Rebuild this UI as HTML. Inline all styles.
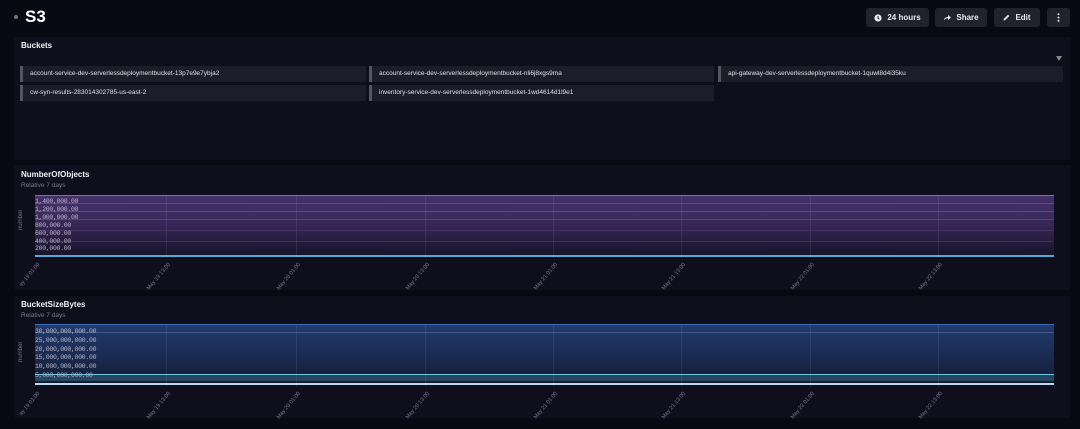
<!DOCTYPE html>
<html><head><meta charset="utf-8"><style>
*{margin:0;padding:0;box-sizing:border-box}
body{width:1080px;height:429px;background:#090914;font-family:"Liberation Sans",sans-serif;color:#fff;position:relative;overflow:hidden}
.abs{position:absolute}
.btn{position:absolute;top:8px;height:19px;background:#22222e;border-radius:3px;color:#e8e8ee;font-size:8px;font-weight:bold;display:flex;align-items:center;justify-content:center;gap:5px}
.panel{position:absolute;left:14px;width:1056px;background:#0e0e1c;border-radius:2px}
.ptitle{position:absolute;left:7px;font-size:8px;font-weight:bold;color:#f0f0f5}
.psub{position:absolute;left:7px;font-size:6.5px;color:#7a7a88}
.tag{position:absolute;height:16px;background:#1c1c2a;border-left:3px solid #55555f;font-size:6.5px;color:#e0e0e8;padding-left:7px;line-height:16px;white-space:nowrap;overflow:hidden}
.yl{position:absolute;font-size:6.5px;color:#b8b8c8;font-family:"Liberation Mono",monospace;letter-spacing:-0.3px}
.xl{position:absolute;font-size:5.5px;color:#7a7a90;transform:rotate(-50deg);transform-origin:right top;white-space:nowrap}
.vg{position:absolute;width:1px;background:rgba(255,255,255,0.08)}
</style></head><body>
<div class="abs" style="left:14px;top:15px;width:4px;height:4px;border-radius:50%;background:#777"></div>
<div class="abs" style="left:25px;top:7px;font-size:17px;font-weight:bold">S3</div>
<div class="btn" style="left:866px;width:63px"><svg width="8" height="8" viewBox="0 0 8 8"><circle cx="4" cy="4" r="3.6" fill="#e8e8ee"/><path d="M4 2v2.2l1.4.9" stroke="#22222e" stroke-width="1" fill="none"/></svg>24 hours</div>
<div class="btn" style="left:935px;width:52px"><svg width="8" height="7" viewBox="0 0 8 7"><path d="M1 6.5C1 4 3 3 5 3V1l3 2.6L5 6V4.3C3 4.3 2 5 1 6.5z" fill="#e8e8ee"/></svg>Share</div>
<div class="btn" style="left:994px;width:46px"><svg width="7" height="7" viewBox="0 0 7 7"><path d="M0.5 6.5l0.4-1.7L5 0.7l1.3 1.3L2.2 6.1z" fill="#e8e8ee"/></svg>Edit</div>
<div class="btn" style="left:1047px;width:23px"><svg width="3" height="9" viewBox="0 0 3 9"><circle cx="1.5" cy="1.2" r="1" fill="#e8e8ee"/><circle cx="1.5" cy="4.5" r="1" fill="#e8e8ee"/><circle cx="1.5" cy="7.8" r="1" fill="#e8e8ee"/></svg></div>

<div class="panel" style="top:37px;height:123px">
<div class="ptitle" style="top:4px">Buckets</div>
<div class="abs" style="left:1042px;top:19px;width:0;height:0;border-left:3px solid transparent;border-right:3px solid transparent;border-top:5px solid #888"></div>
<div class="tag" style="left:6px;top:29px;width:346px">account-service-dev-serverlessdeploymentbucket-13p7e9e7ybja2</div>
<div class="tag" style="left:355px;top:29px;width:345px">account-service-dev-serverlessdeploymentbucket-nli6j8xgs9ma</div>
<div class="tag" style="left:704px;top:29px;width:345px">api-gateway-dev-serverlessdeploymentbucket-1quwl8d4i35ku</div>
<div class="tag" style="left:6px;top:48px;width:346px">cw-syn-results-283014302785-us-east-2</div>
<div class="tag" style="left:355px;top:48px;width:345px">inventory-service-dev-serverlessdeploymentbucket-1wd4614d1l9e1</div>
</div>

<div class="panel" style="top:165px;height:125px">
<div class="ptitle" style="top:5px">NumberOfObjects</div>
<div class="psub" style="top:17px">Relative 7 days</div>
</div>
<div class="abs" style="left:35px;top:195px;width:1019px;height:61px;background:linear-gradient(#45306a,#3a2a5c 40%,#261c3e 75%,#17142a);border-top:1.5px solid #9a5cc8"></div>
<div class="abs" style="left:35px;top:203px;width:1019px;height:1px;background:rgba(160,120,210,0.35)"></div>
<div class="abs" style="left:35px;top:211px;width:1019px;height:1px;background:rgba(160,120,210,0.35)"></div>
<div class="abs" style="left:35px;top:219px;width:1019px;height:1px;background:rgba(160,120,210,0.3)"></div>
<div class="abs" style="left:35px;top:230px;width:1019px;height:1px;background:rgba(160,120,210,0.2)"></div>
<div class="abs" style="left:35px;top:241px;width:1019px;height:1px;background:rgba(160,120,210,0.2)"></div>
<div class="abs" style="left:35px;top:255px;width:1019px;height:2px;background:#5aa8d8"></div>
<div class="yl" style="left:35px;top:198px">1,400,000.00</div>
<div class="yl" style="left:35px;top:206px">1,200,000.00</div>
<div class="yl" style="left:35px;top:214px">1,000,000.00</div>
<div class="yl" style="left:35px;top:222px">800,000.00</div>
<div class="yl" style="left:35px;top:230px">600,000.00</div>
<div class="yl" style="left:35px;top:238px">400,000.00</div>
<div class="yl" style="left:35px;top:245px">200,000.00</div>
<div class="abs" style="left:18px;top:230px;font-size:6px;color:#777;transform:rotate(-90deg);transform-origin:left top">number</div>

<div class="panel" style="top:296px;height:122px">
<div class="ptitle" style="top:4px">BucketSizeBytes</div>
<div class="psub" style="top:16px">Relative 7 days</div>
</div>
<div class="abs" style="left:35px;top:324px;width:1019px;height:60px;background:linear-gradient(#223a6c,#1d2f5a 40%,#16223e 80%,#111a30);border-top:1.5px solid #3a70b8"></div>
<div class="abs" style="left:35px;top:332px;width:1019px;height:1px;background:rgba(120,160,220,0.35)"></div>
<div class="abs" style="left:35px;top:374px;width:1019px;height:7px;background:#24465e;border-top:1.5px solid #6cc4e8"></div>
<div class="abs" style="left:35px;top:383px;width:1019px;height:2px;background:#bcd8f0"></div>
<div class="yl" style="left:35px;top:328px">30,000,000,000.00</div>
<div class="yl" style="left:35px;top:337px">25,000,000,000.00</div>
<div class="yl" style="left:35px;top:346px">20,000,000,000.00</div>
<div class="yl" style="left:35px;top:354px">15,000,000,000.00</div>
<div class="yl" style="left:35px;top:363px">10,000,000,000.00</div>
<div class="yl" style="left:35px;top:372px">5,000,000,000.00</div>
<div class="abs" style="left:18px;top:362px;font-size:6px;color:#777;transform:rotate(-90deg);transform-origin:left top">number</div>

<div class="vg" style="left:166px;top:196px;height:62px"></div><div class="vg" style="left:296px;top:196px;height:62px"></div><div class="vg" style="left:425px;top:196px;height:62px"></div><div class="vg" style="left:553px;top:196px;height:62px"></div><div class="vg" style="left:681px;top:196px;height:62px"></div><div class="vg" style="left:810px;top:196px;height:62px"></div><div class="vg" style="left:938px;top:196px;height:62px"></div>
<div class="vg" style="left:166px;top:325px;height:62px"></div><div class="vg" style="left:296px;top:325px;height:62px"></div><div class="vg" style="left:425px;top:325px;height:62px"></div><div class="vg" style="left:553px;top:325px;height:62px"></div><div class="vg" style="left:681px;top:325px;height:62px"></div><div class="vg" style="left:810px;top:325px;height:62px"></div><div class="vg" style="left:938px;top:325px;height:62px"></div>

<div class="xl" style="right:1043px;top:262px">ay 19 01:00</div>
<div class="xl" style="right:913px;top:262px">May 19 13:00</div>
<div class="xl" style="right:783px;top:262px">May 20 01:00</div>
<div class="xl" style="right:654px;top:262px">May 20 13:00</div>
<div class="xl" style="right:526px;top:262px">May 21 01:00</div>
<div class="xl" style="right:398px;top:262px">May 21 13:00</div>
<div class="xl" style="right:269px;top:262px">May 22 01:00</div>
<div class="xl" style="right:141px;top:262px">May 22 13:00</div>

<div class="xl" style="right:1043px;top:391px">ay 19 01:00</div>
<div class="xl" style="right:913px;top:391px">May 19 13:00</div>
<div class="xl" style="right:783px;top:391px">May 20 01:00</div>
<div class="xl" style="right:654px;top:391px">May 20 13:00</div>
<div class="xl" style="right:526px;top:391px">May 21 01:00</div>
<div class="xl" style="right:398px;top:391px">May 21 13:00</div>
<div class="xl" style="right:269px;top:391px">May 22 01:00</div>
<div class="xl" style="right:141px;top:391px">May 22 13:00</div>
</body></html>
